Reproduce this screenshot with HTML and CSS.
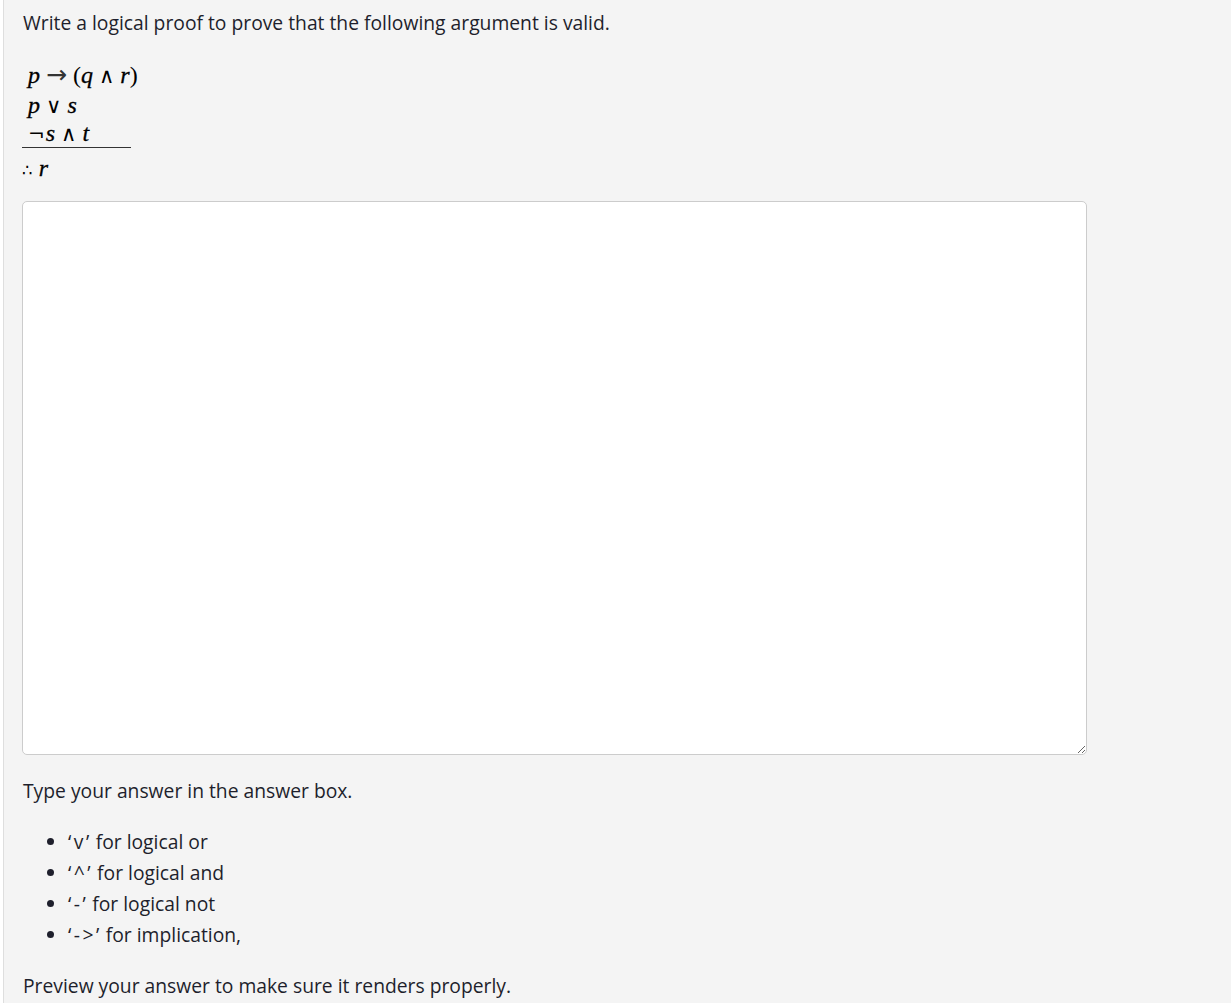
FILE: index.html
```html
<!DOCTYPE html>
<html>
<head>
<meta charset="utf-8">
<link rel="stylesheet" href="styles.css">
</head>
<body>
<div class="panel">
  <p class="prompt">Write a logical proof to prove that the following argument is valid.</p>
  <div class="argument">
    <div class="line"><i>p</i><span class="op arrow">→</span><span class="par">(</span><i>q</i><span class="op">∧</span><i>r</i><span class="par">)</span></div>
    <div class="line"><i>p</i><span class="op">∨</span><i>s</i></div>
    <div class="line last"><span class="neg">¬</span><i>s</i><span class="op">∧</span><i>t</i></div>
    <div class="line concl"><span class="therefore">∴</span><i>r</i></div>
  </div>
  <textarea class="answer"></textarea>
  <p class="hint">Type your answer in the answer box.</p>
  <ul class="keys">
    <li><span class="q">‘v’</span> for logical or</li>
    <li><span class="q">‘^’</span> for logical and</li>
    <li><span class="q">‘-’</span> for logical not</li>
    <li><span class="q">‘-&gt;’</span> for implication,</li>
  </ul>
  <p class="hint">Preview your answer to make sure it renders properly.</p>
</div>
</body>
</html>
```

FILE: styles.css
```css
html, body {
  margin: 0;
  padding: 0;
  background: #ffffff;
}
.panel {
  margin-left: 3px;
  border-left: 1px solid #dedede;
  background: #f4f4f4;
  min-height: 1003px;
  padding: 8px 0 0 19px;
  font-family: "Open Sans", sans-serif;
  font-size: 19.3px;
  color: #1e1f2c;
  box-sizing: border-box;
}
.prompt {
  margin: 0 0 22px 0;
  line-height: 30px;
}
.argument {
  font-family: "Liberation Serif", serif;
  font-size: 24px;
  color: #000;
  margin-bottom: 19px;
  margin-left: -1px;
}
.line {
  height: 30px;
  line-height: 30px;
  padding-left: 6px;
}
.line.last {
  width: 103px;
  height: 27px;
  line-height: 26px;
  border-bottom: 1px solid #333;
}
.line i {
  font-family: "Liberation Serif", serif;
  font-style: italic;
  -webkit-text-stroke: 0.3px #000;
}
.op {
  margin: 0 6px;
  font-family: "DejaVu Sans", sans-serif;
  font-size: 21px;
}
.op.arrow {
  margin: 0 6px 0 6px;
  font-size: 25px;
  color: #333;
}
.par {
  font-family: "Liberation Serif", serif;
  font-size: 24px;
}
.neg {
  font-family: "DejaVu Sans", sans-serif;
  font-size: 20px;
  margin-right: 1px;
}
.concl {
  padding-top: 6px;
  padding-left: 0;
  height: 28px;
  line-height: 28px;
}
.therefore {
  font-family: "DejaVu Sans", sans-serif;
  font-size: 17px;
  margin-right: 6px;
}
.answer {
  display: block;
  width: 1065px;
  height: 554px;
  box-sizing: border-box;
  border: 1px solid #cccccc;
  border-radius: 5px;
  background: #ffffff;
  margin: 0 0 20px -1px;
  resize: both;
}
.hint {
  margin: 0;
  line-height: 31px;
}
.keys {
  margin: 20px 0 20px 0;
  padding-left: 45px;
  line-height: 31px;
}
.q {
  letter-spacing: 2.5px;
  margin-right: -1px;
}
```
